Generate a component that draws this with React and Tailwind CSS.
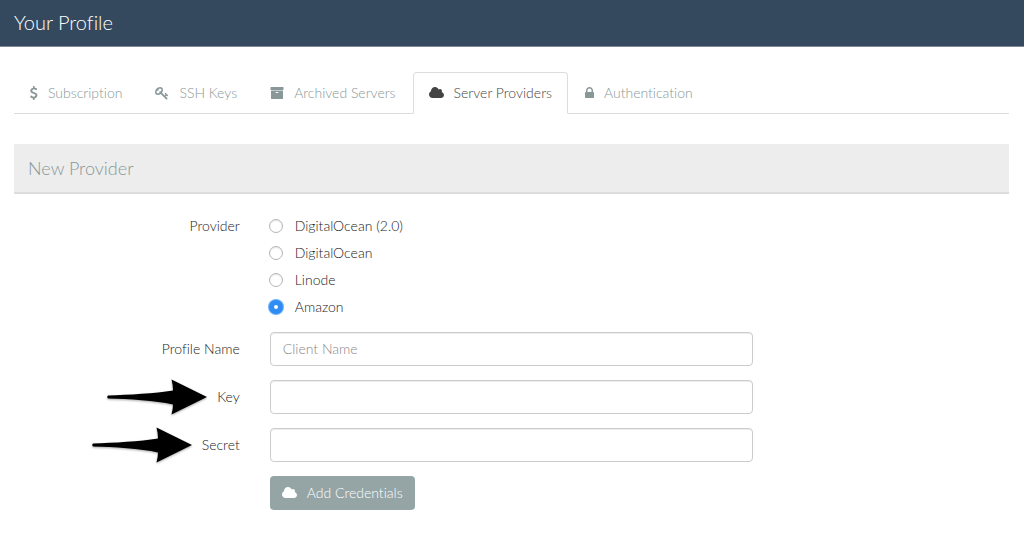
import React, { useState } from 'react';

const ICONS = {
    dollar: {
        viewBox: '448 0 960 1792',
        className: 'w-2',
        d: 'M1362 1185q0 153-99.5 263.5t-258.5 136.5v175q0 14-9 23t-23 9h-135q-13 0-22.5-9.5t-9.5-22.5v-175q-66-9-127.5-31t-101.5-44.5-74-48-46.5-37.5-17.5-18q-17-21-2-41l103-135q7-10 23-12 15-2 24 9l2 2q113 99 243 125 37 8 74 8 81 0 142.5-43t61.5-122q0-28-15-53t-33.5-42-58.5-37.5-66-32-80-32.5q-39-16-61.5-25t-61.5-26.5-62.5-31-56.5-35.5-53.5-42.5-43.5-49-35.5-58-21-66.5-8.5-78q0-138 98-242t255-134v-180q0-13 9.5-22.5t22.5-9.5h135q14 0 23 9t9 23v176q57 6 110.5 23t87 33.5 63.5 37.5 39 29 15 14q17 18 5 38l-81 146q-8 15-23 16-14 3-27-7-3-3-14.5-12t-39-26.5-58.5-32-74.5-26-85.5-11.5q-95 0-155 43t-60 111q0 26 8.5 48t29.5 41.5 39.5 33 56 31 60.5 27 70 27.5q53 20 81 31.5t76 35 75.5 42.5 62 50 53 63.5 31.5 76.5 13 94z',
    },
    key: {
        viewBox: '0 0 1792 1792',
        className: 'w-3.5',
        d: 'M832 512q0-80-56-136t-136-56-136 56-56 136q0 42 19 83-41-19-83-19-80 0-136 56t-56 136 56 136 136 56 136-56 56-136q0-42-19-83 41 19 83 19 80 0 136-56t56-136zm851 704q0 17-49 66t-66 49q-9 0-28.5-16t-36.5-33-38.5-40-24.5-26l-96 96 220 220q28 28 28 68 0 42-39 81t-81 39q-40 0-68-28l-671-671q-176 131-365 131-163 0-265.5-102.5t-102.5-265.5q0-160 95-313t248-248 313-95q163 0 265.5 102.5t102.5 265.5q0 189-131 365l355 355 96-96q-3-3-26-24.5t-40-38.5-33-36.5-16-28.5q0-17 49-66t66-49q13 0 23 10 6 6 46 44.5t82 79.5 86.5 86 73 78 28.5 41z',
    },
    archive: {
        viewBox: '0 0 1792 1792',
        className: 'w-3.5',
        d: 'M1088 832q0-26-19-45t-45-19h-256q-26 0-45 19t-19 45 19 45 45 19h256q26 0 45-19t19-45zm576-192v960q0 26-19 45t-45 19h-1408q-26 0-45-19t-19-45v-960q0-26 19-45t45-19h1408q26 0 45 19t19 45zm64-448v256q0 26-19 45t-45 19h-1536q-26 0-45-19t-19-45v-256q0-26 19-45t45-19h1536q26 0 45 19t19 45z',
    },
    cloud: {
        viewBox: '64 0 1920 1792',
        className: 'w-[15px]',
        d: 'M1984 1152q0 159-112.5 271.5t-271.5 112.5h-1088q-185 0-316.5-131.5t-131.5-316.5q0-132 71-241.5t187-163.5q-2-28-2-43 0-212 150-362t362-150q158 0 286.5 88t187.5 230q70-62 166-62 106 0 181 75t75 181q0 75-41 138 129 30 213 134.5t84 239.5z',
    },
    lock: {
        viewBox: '320 0 1152 1792',
        className: 'w-[9px]',
        d: 'M640 768h512v-192q0-106-75-181t-181-75-181 75-75 181v192zm832 96v576q0 40-28 68t-68 28h-960q-40 0-68-28t-28-68v-576q0-40 28-68t68-28h32v-192q0-184 132-316t316-132 316 132 132 316v192h32q40 0 68 28t28 68z',
    },
};

const TABS = [
    { icon: 'dollar', label: 'Subscription' },
    { icon: 'key', label: 'SSH Keys' },
    { icon: 'archive', label: 'Archived Servers' },
    { icon: 'cloud', label: 'Server Providers' },
    { icon: 'lock', label: 'Authentication' },
];

const PROVIDERS = ['DigitalOcean (2.0)', 'DigitalOcean', 'Linode', 'Amazon'];

const Icon = ({ name }) => {
    const { viewBox, className, d } = ICONS[name];
    return (
        <svg viewBox={viewBox} className={`h-3.5 shrink-0 fill-current ${className}`} aria-hidden="true">
            <path d={d} />
        </svg>
    );
};

const Arrow = () => (
    <svg viewBox="0 0 100 36" className="-my-px h-9 w-[100px] shrink-0 drop-shadow-[0_1px_1px_rgba(0,0,0,0.35)]" aria-hidden="true">
        <path d="M1 16.5C22 15.8 48 14.5 66 11.5Q66 6 64.5 0.5L100 18L64.5 35.5Q66 30 66 25.5C48 21.5 22 20 1 19.5Q-0.5 18 1 16.5Z" />
    </svg>
);

const Field = ({ id, label, value, onChange, arrow, ...rest }) => (
    <div className="flex items-center">
        <div className="flex w-1/4 items-center justify-end gap-2.5 pr-[23px]">
            {arrow && <Arrow />}
            <label htmlFor={id}>{label}</label>
        </div>
        <div className="w-1/2 px-[7px]">
            <input
                id={id}
                type="text"
                value={value}
                onChange={(e) => onChange(e.target.value)}
                className="block h-[34px] w-full rounded border border-[#ccc] bg-white px-3 pb-0.5 shadow-[inset_0_1px_1px_rgba(0,0,0,0.075)] outline-none placeholder:text-[#888] focus:border-[#66afe9]"
                {...rest}
            />
        </div>
    </div>
);

const App = () => {
    const [activeTab, setActiveTab] = useState('Server Providers');
    const [provider, setProvider] = useState('Amazon');
    const [name, setName] = useState('');
    const [key, setKey] = useState('');
    const [secret, setSecret] = useState('');

    return (
        <div className="min-h-screen bg-white font-['Lato',sans-serif] text-sm font-light text-[#222] [font-variant-ligatures:none]">
            <header className="border-b border-[#7b8794] bg-[#34495e] px-3.5 pb-0.5">
                <h1 className="text-xl leading-[44px] font-light text-white">Your Profile</h1>
            </header>

            <main className="pt-[25px] pr-[15px] pb-4 pl-3.5">
                <nav className="flex border-b border-[#ddd]">
                    {TABS.map(({ icon, label }) => (
                        <a
                            key={label}
                            href="#"
                            onClick={(e) => { e.preventDefault(); setActiveTab(label); }}
                            className={`-mb-px mr-px flex items-center gap-2.5 rounded-t border px-[15px] py-2.5 leading-5 ${activeTab === label ? 'border-[#ddd] border-b-white bg-white text-[#444]' : 'border-transparent text-[#889899]'}`}
                        >
                            <Icon name={icon} />
                            {label}
                        </a>
                    ))}
                </nav>

                <section className="mt-[30px]">
                    <h2 className="border-b-2 border-[#ddd] bg-[#ededed] px-3.5 text-lg leading-[48px] font-light text-[#889899]">New Provider</h2>

                    <form className="mt-[18px] flex flex-col gap-3.5" onSubmit={(e) => e.preventDefault()}>
                        <div className="-mb-0.5 flex" role="radiogroup" aria-labelledby="provider-label">
                            <div id="provider-label" className="w-1/4 pr-[23px] text-right leading-[27px]">Provider</div>
                            <div className="w-1/2 px-1.5">
                                {PROVIDERS.map((p) => (
                                    <label key={p} className="flex items-center gap-3 leading-[27px]">
                                        <input
                                            type="radio"
                                            name="provider"
                                            checked={provider === p}
                                            onChange={() => setProvider(p)}
                                            className="size-3.5 appearance-none rounded-full border border-[#b5b5b5] bg-white shadow-[inset_0_1px_1px_rgba(0,0,0,0.1)] checked:border-[5px] checked:border-[#2f8cf5] checked:shadow-[0_0_0_1px_#6db3fb]"
                                        />
                                        {p}
                                    </label>
                                ))}
                            </div>
                        </div>

                        <Field id="name" label="Profile Name" value={name} onChange={setName} placeholder="Client Name" />
                        <Field id="key" label="Key" value={key} onChange={setKey} arrow />
                        <Field id="secret" label="Secret" value={secret} onChange={setSecret} arrow />

                        <div className="ml-[25%] px-[7px]">
                            <button type="submit" className="flex h-[34px] items-center gap-2.5 rounded bg-[#95a5a6] px-3 text-white">
                                <Icon name="cloud" />
                                Add Credentials
                            </button>
                        </div>
                    </form>
                </section>
            </main>
        </div>
    );
};

export default App;
